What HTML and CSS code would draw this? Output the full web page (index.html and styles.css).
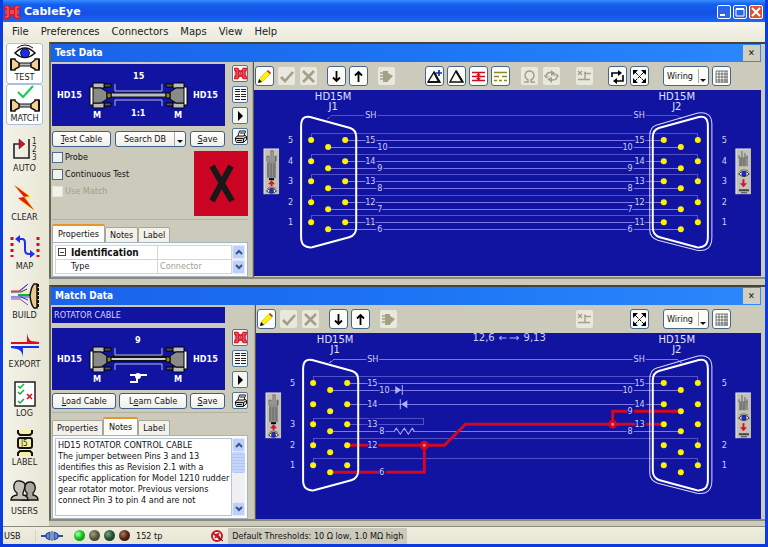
FILE: index.html
```html
<!DOCTYPE html>
<html lang="en">
<head>
    <meta charset="UTF-8">
    <title>CableEye</title>
    <link rel="stylesheet" href="styles.css">
</head>
<body>

<!-- Shared icons -->
<svg class="defs" aria-hidden="true">
    <defs>
        <symbol id="i-logo" viewBox="0 0 16 14">
            <path d="M0 0h5l2 3h2l2-3h5v3l-1 1v6l1 1v3h-5l-2-3H7l-2 3H0v-3l1-1V4L0 3z" fill="#dc1828"/>
            <path d="M4 2v10M12 2v10M7 5v4M9 5v4" stroke="#fff" stroke-opacity=".45" fill="none"/>
            <path d="M1 2h3M12 2h3M1 12h3M12 12h3M2 5v4M14 5v4" stroke="#fff" stroke-opacity=".35" fill="none"/>
        </symbol>
        <symbol id="i-eye" viewBox="0 0 22 15">
            <path d="M1 9Q11-1 21 9Q11 18 1 9z" fill="#fff" stroke="#111" stroke-width="1.6"/>
            <circle cx="11" cy="9" r="4.4" fill="#1a2cf0" stroke="#112" />
            <path d="M3 4Q11-2 19 4" fill="none" stroke="#111"/>
        </symbol>
        <symbol id="i-plugs" viewBox="0 0 30 13">
            <path d="M9 5h12v3H9z" fill="#bbb" stroke="#111"/>
            <path d="M1 1h4v1l4 3v4l-4 2v1H1zM29 1h-4v1l-4 3v4l4 2v1h4z" fill="#f4cf92" stroke="#111" stroke-width="1.4"/>
            <path d="M1 1v11M29 1v11" stroke="#111" stroke-width="2"/>
        </symbol>
        <symbol id="i-list" viewBox="0 0 13 13">
            <path d="M1 1.500h5M7 1.500h5M1 3.500h5M7 3.500h5M1 6.500h5M7 6.500h5M1 8.500h5M7 8.500h5M1 11.500h5M7 11.500h5" stroke="#222"/>
        </symbol>
        <symbol id="i-play" viewBox="0 0 13 13"><path d="M4 2l5 5-5 5z" fill="#000"/></symbol>
        <symbol id="i-print" viewBox="0 0 13 13">
            <path d="M1.500 7.500l3-2h7l1 1v3l-3 3h-7l-1-2z" fill="#d4d2c8" stroke="#111"/>
            <path d="M4 6l1.500-5h6L10 6z" fill="#fff" stroke="#111"/>
            <path d="M1.500 8.500h8l3-2M9.500 9v3M3 10.500h5M6 3h4" stroke="#111" fill="none"/>
        </symbol>
        <symbol id="i-pencil" viewBox="0 0 15 15">
            <path d="M2 13l1-4 7-7 3 3-7 7z" fill="#fff200" stroke="#b9a400" stroke-width=".5"/>
            <path d="M10 2l1-1 3 3-1 1z" fill="#c01818"/><path d="M1 14l1-4 3 3z" fill="#000"/>
        </symbol>
        <symbol id="i-check" viewBox="0 0 15 15"><path d="M2 8l4 4 8-9" fill="none" stroke="#a3a085" stroke-width="2.6"/></symbol>
        <symbol id="i-cross" viewBox="0 0 15 15"><path d="M2 2l11 11M13 2L2 13" stroke="#a3a085" stroke-width="2.6"/></symbol>
        <symbol id="i-down" viewBox="0 0 15 15"><path d="M7.500 2v10M4 8.500l3.500 3.500L11 8.500" fill="none" stroke="#000" stroke-width="1.800"/></symbol>
        <symbol id="i-up" viewBox="0 0 15 15"><path d="M7.500 13V3M4 6.500l3.500-3.500L11 6.500" fill="none" stroke="#000" stroke-width="1.800"/></symbol>
        <symbol id="i-conn" viewBox="0 0 15 15">
            <path d="M4 2h5v2l5 3-5 5v1H4z" fill="#a3a085"/><path d="M1 4h4M1 7h4M1 10h4" stroke="#a3a085" stroke-width="1.500"/>
        </symbol>
        <symbol id="i-tri" viewBox="0 0 15 15"><path d="M7 2L1 13h13z" fill="none" stroke="#111" stroke-width="1.400"/><path d="M7 2l6.500 11" stroke="#111" stroke-width="2"/></symbol>
        <symbol id="i-triplus" viewBox="0 0 15 15">
            <path d="M7 3L1 13h12z" fill="none" stroke="#111" stroke-width="1.400"/><path d="M7 3l5 10H1" fill="none" stroke="#111" stroke-width="2"/>
            <path d="M12 1v6M9 4h6" stroke="#1424d0" stroke-width="1.700"/>
        </symbol>
        <symbol id="i-short" viewBox="0 0 15 15">
            <path d="M1 3.500h13M1 7.500h13M1 11.500h13M7.500 3v9" fill="none" stroke="#d00c20" stroke-width="1.500"/>
            <path d="M5 6.500L7.500 4 10 6.500zM5 9l2.500 2.500L10 9z" fill="#d00c20"/>
        </symbol>
        <symbol id="i-open" viewBox="0 0 15 15"><path d="M1 3.500h13M1 7.500h5M9 7.500h5M1 11.500h3M6 11.500h3M11 11.500h3" stroke="#8c8a28" stroke-width="1.600"/></symbol>
        <symbol id="i-ohm" viewBox="0 0 15 15"><path d="M2 13h4v-2C1 8 3 2 7.500 2S14 8 9 11v2h4" fill="none" stroke="#a3a085" stroke-width="1.500"/></symbol>
        <symbol id="i-sync" viewBox="0 0 15 15">
            <path d="M2 8c0-4 4-6 8-4M13 6c1 5-4 6-8 4" fill="none" stroke="#a3a085" stroke-width="1.500"/>
            <path d="M7 7V1l5 4zM8 8v6l-5-4z" fill="#a3a085"/><path d="M0 6l2 3 3-2M15 8l-2-3-3 2" fill="none" stroke="#a3a085"/>
        </symbol>
        <symbol id="i-xf" viewBox="0 0 15 15"><path d="M1 2l4 4M5 2L1 6M1 10.500h7M8 10.500V4.500h6M8 10.500h5M7 3.500h2" fill="none" stroke="#a3a085" stroke-width="1.400"/></symbol>
        <symbol id="i-rotate" viewBox="0 0 15 15">
            <path d="M2 8V4h7M13 6v6H6" fill="none" stroke="#000" stroke-width="1.600"/><path d="M8 1l4 3-4 3zM7 9l-4 3 4 3z"/>
        </symbol>
        <symbol id="i-expand" viewBox="0 0 15 15">
            <path d="M3 3l9 9M12 3l-9 9" stroke="#000" stroke-dasharray="4 1"/><path d="M1 1h5L1 6zM14 1H9l5 5zM1 14h5L1 9zM14 14H9l5-5z"/>
        </symbol>
        <symbol id="i-grid" viewBox="0 0 15 15"><path d="M2 2v12M5 2v12M8 2v12M11 2v12M13 2v12M2 2h12M2 5h12M2 8h12M2 11h12M2 13h12" stroke="#444" stroke-width=".7"/></symbol>

        <!-- Cable end with hood and thumb screws -->
        <g id="cable-end">
            <path d="M38 23h4v18h-4z" fill="#fff" stroke="#000"/>
            <path d="M52 20h7v3h-7zM52 39h7v3h-7z" fill="#555" stroke="#000"/>
            <path d="M41 19h11v5H41zM41 39h11v5H41z" fill="#bbb" stroke="#000"/>
            <path d="M41 24h8l6 4v7l-6 4h-8z" fill="#8a8a8a" stroke="#000"/>
            <path d="M55 29h4v5h-4z" fill="#8a8420" stroke="#000"/>
        </g>
        <!-- Shell outline of an HD15 connector and its pins -->
        <path id="shell" d="M47 36Q47 25 56 27L96 38Q102 40 102 47V137Q102 145 95 147L58 157Q47 158 47 147z"/>
        <path id="shell-outer" d="M43 34Q43 21 57 23L98 35Q105 37 105 46V140Q105 147 97 150L58 160Q43 162 43 147z"/>
        <g id="pins">
            <circle cx="57" cy="50" r="3"/><circle cx="57" cy="71" r="3"/><circle cx="57" cy="91" r="3"/><circle cx="57" cy="112" r="3"/><circle cx="57" cy="132" r="3"/>
            <circle cx="91" cy="50" r="3"/><circle cx="91" cy="71" r="3"/><circle cx="91" cy="91" r="3"/><circle cx="91" cy="112" r="3"/><circle cx="91" cy="132" r="3"/>
            <circle cx="74" cy="57" r="3"/><circle cx="74" cy="78" r="3"/><circle cx="74" cy="98" r="3"/><circle cx="74" cy="119" r="3"/><circle cx="74" cy="139" r="3"/>
        </g>
        <g id="probe-left">
            <path d="M0 0h15v45H0z" fill="#c4c2b6"/><path d="M0 45V0h15" fill="none" stroke="#eee"/>
            <path d="M3 12h9v17H3z" fill="#8c8c8c"/><path d="M3 12V7h2v5M7 12V2h2v10M11 12V7h1v5M4 14v14M7 14v14M10 14v14" fill="none" stroke="#666"/>
            <path d="M5 29h5v2H5z"/><path d="M7.500 37v-4" stroke="#d8102a" stroke-width="2"/><path d="M4 35l3.500-4 3.500 4z" fill="#d8102a"/>
            <use href="#i-eye" x="2" y="37" width="11" height="8"/>
        </g>
        <g id="probe-right">
            <path d="M0 0h15v45H0z" fill="#c4c2b6"/><path d="M0 45V0h15" fill="none" stroke="#eee"/>
            <path d="M3 8h9v9H3z" fill="#8c8c8c"/><path d="M3 9V6M6 9V2M9 9V4M11 9V6M5 9v8M8 9v8" fill="none" stroke="#666"/>
            <use href="#i-eye" x="2" y="20" width="12" height="8"/>
            <path d="M7.500 30v5" stroke="#d8102a" stroke-width="2"/><path d="M4 34l3.500 4 3.500-4z" fill="#d8102a"/>
            <path d="M3 40h10v2H3zM5 43h6v1H5z" fill="#444"/>
        </g>
    </defs>
</svg>

<div class="app">
    <header class="titlebar">
        <svg class="logo" width="16" height="14"><use href="#i-logo"/></svg>
        <h1>CableEye</h1>
        <div class="window-buttons">
            <button type="button" aria-label="Minimize"><svg width="12" height="12"><path d="M2 8h5v2H2z" fill="#fff"/></svg></button>
            <button type="button" aria-label="Maximize"><svg width="12" height="12"><path d="M2 3h8v7H2z" fill="none" stroke="#fff"/><path d="M2 2h8v2H2z" fill="#fff"/></svg></button>
            <button type="button" class="close" aria-label="Close"><svg width="12" height="12"><path d="M2 2l8 8M10 2l-8 8" stroke="#fff" stroke-width="2"/></svg></button>
        </div>
    </header>

    <nav class="menubar">
        <a href="#">File</a>
        <a href="#">Preferences</a>
        <a href="#">Connectors</a>
        <a href="#">Maps</a>
        <a href="#">View</a>
        <a href="#">Help</a>
    </nav>

    <div class="workspace">
        <aside class="sidebar">
            <button type="button" class="tool boxed">
                <svg width="30" height="28"><use href="#i-eye" x="4" y="0" width="22" height="15"/><use href="#i-plugs" x="0" y="14" width="30" height="13"/></svg>
                <span>TEST</span>
            </button>
            <button type="button" class="tool boxed">
                <svg width="30" height="28"><path d="M8 7l5 5L23 1" fill="none" stroke="#10d050" stroke-width="2"/><use href="#i-plugs" x="0" y="14" width="30" height="13"/></svg>
                <span>MATCH</span>
            </button>
            <button type="button" class="tool">
                <svg width="30" height="26">
                    <path d="M12 8H4v14h15V3" fill="none" stroke="#222" stroke-width="1.600"/><path d="M9 3l6 5-6 5z" fill="#d8101c" stroke="#222" stroke-width=".5"/>
                    <text x="22" y="8" class="tiny">1</text><text x="22" y="16" class="tiny">2</text><text x="22" y="24" class="tiny">3</text>
                </svg>
                <span>AUTO</span>
            </button>
            <button type="button" class="tool">
                <svg width="30" height="26"><path d="M6 0l15 12-5 1 9 13L9 15l6-1z" fill="#ffe600"/><path d="M4 0l15 11-5 1 10 13L8 13l6-1z" fill="#e01c20"/></svg>
                <span>CLEAR</span>
            </button>
            <button type="button" class="tool">
                <svg width="30" height="26">
                    <path d="M2 3v20M28 3v20" stroke="#d80c18" stroke-width="3" stroke-dasharray="3 3"/>
                    <path d="M8 5h4q3 0 3 4v7q0 4 4 4h3" fill="none" stroke="#1a30f0" stroke-width="2"/><path d="M5 5l5-4v8zM25 20l-5-4v8z" fill="#1a30f0"/>
                </svg>
                <span>MAP</span>
            </button>
            <button type="button" class="tool">
                <svg width="30" height="26">
                    <path d="M1 8h8l8-6" fill="none" stroke="#e0203c"/><path d="M1 9h10l6-3" fill="none" stroke="#334"/><path d="M8 12h12" stroke="#18b028" stroke-width="2"/>
                    <path d="M1 14h10l7 3" fill="none" stroke="#1a30f0"/><path d="M1 16h9l8 6" fill="none" stroke="#9040c0"/><path d="M10 8l8-7M10 14h9" stroke="#2040e0"/>
                    <path d="M27 1h-3q-3 3-4 12 1 9 4 12h3z" fill="#ecc88c" stroke="#111" stroke-width="1.500"/><path d="M28 1v24" stroke="#111" stroke-width="2" stroke-dasharray="3 1"/>
                </svg>
                <span>BUILD</span>
            </button>
            <button type="button" class="tool">
                <svg width="30" height="26"><path d="M1 12h28v-2l-8-1q-3-2-4-8v9H1z" fill="#d8101c"/><path d="M29 14H1v2l6 1q5 1 6 8v-9h16z" fill="#1a30f0"/></svg>
                <span>EXPORT</span>
            </button>
            <button type="button" class="tool">
                <svg width="30" height="26">
                    <path d="M5 1h20v24H5z" fill="#fff" stroke="#222" stroke-width="1.500"/>
                    <path d="M8 5l2 2 4-4M8 11l2 2 4-4M8 20l2 2 4-4" fill="none" stroke="#10b040" stroke-width="1.500"/>
                    <path d="M17 13l5 5M22 13l-5 5" stroke="#d81020" stroke-width="1.600"/>
                </svg>
                <span>LOG</span>
            </button>
            <button type="button" class="tool">
                <svg width="30" height="26">
                    <path d="M8 0v3l2 2h10l2-2V0zM8 26v-3l2-2h10l2 2v3z" fill="#f6efa0"/>
                    <path d="M8 0v3l2 2h10l2-2V0M8 26v-3l2-2h10l2 2v3" fill="none" stroke="#111" stroke-width="2"/>
                    <rect x="8" y="8" width="14" height="10" rx="2" fill="#f6efa0" stroke="#111" stroke-width="2"/><text x="11" y="16" class="tiny">J5</text>
                </svg>
                <span>LABEL</span>
            </button>
            <button type="button" class="tool">
                <svg width="30" height="26">
                    <path d="M12 21q0-4 5-5V14q-3-3-2-7t5-4 5 4-2 7v2q5 1 5 5z" fill="#a8a69a" stroke="#111" stroke-width="1.300"/>
                    <path d="M1 21q0-4 6-5V14q-4-3-3-8t6-4 5 4-2 8v2q5 1 5 5z" fill="#c4c2b6" stroke="#111" stroke-width="1.300"/>
                </svg>
                <span>USERS</span>
            </button>
        </aside>

        <main class="panes">
            <section class="pane">
                <header class="pane-title">
                    <h2>Test Data</h2>
                    <button type="button" aria-label="Close Test Data">✕</button>
                </header>
                <div class="pane-body">
                    <div class="info">
                        <div class="info-top">
                            <div class="info-main">
                                <svg class="cable" viewBox="0 0 173 62">
                                    <path d="M63 20v7h47v-7M63 42v-6h47v6" class="bracket"/>
                                    <path d="M59 29h55v4H59z" fill="#bbb" stroke="#111"/>
                                    <use href="#cable-end"/><use href="#cable-end" transform="translate(173 0) scale(-1 1)"/>
                                    <text x="5" y="34">HD15</text><text x="141" y="34">HD15</text>
                                    <text x="81" y="15">15</text><text x="79" y="52">1:1</text>
                                    <text x="41" y="54">M</text><text x="122" y="54">M</text>
                                </svg>
                                <div class="actions">
                                    <button type="button" class="btn"><u>T</u>est Cable</button>
                                    <span class="split">
                                        <button type="button">Search DB</button>
                                        <button type="button" class="arrow" aria-label="Search options"></button>
                                    </span>
                                    <button type="button" class="btn save"><u>S</u>ave</button>
                                </div>
                            </div>
                            <div class="side-tools">
                                <button type="button" aria-label="Cable"><svg width="13" height="13"><use href="#i-logo"/></svg></button>
                                <button type="button" aria-label="List"><svg width="13" height="13"><use href="#i-list"/></svg></button>
                                <button type="button" aria-label="Run"><svg width="13" height="13"><use href="#i-play"/></svg></button>
                                <button type="button" aria-label="Print"><svg width="13" height="13"><use href="#i-print"/></svg></button>
                            </div>
                        </div>
                        <div class="result">
                            <div class="checks">
                                <label><input type="checkbox"> Probe</label>
                                <label><input type="checkbox"> Continuous Test</label>
                                <label class="off"><input type="checkbox" disabled> Use Match</label>
                            </div>
                            <svg class="verdict" width="54" height="65" role="img" aria-label="Fail">
                                <path d="M18 15l20 35M37 15L18 50" stroke="#181818" stroke-width="6"/>
                            </svg>
                        </div>
                        <hr>
                        <div class="tabs">
                            <button type="button" class="active">Properties</button>
                            <button type="button">Notes</button>
                            <button type="button">Label</button>
                        </div>
                        <div class="tab-panel">
                            <table class="props">
                                <tr><th><span class="minus"></span>Identification</th><td></td></tr>
                                <tr><td>Type</td><td class="off">Connector</td></tr>
                            </table>
                            <div class="scroll">
                                <button type="button" aria-label="Scroll up"><svg width="8" height="6"><path d="M1 5l3-3 3 3" class="chev"/></svg></button>
                                <button type="button" aria-label="Scroll down"><svg width="8" height="6"><path d="M1 1l3 3 3-3" class="chev"/></svg></button>
                            </div>
                        </div>
                    </div>
                    <div class="view">
                        <div class="toolbar">
                            <div class="group">
                                <button type="button" aria-label="Edit"><svg width="15" height="15"><use href="#i-pencil"/></svg></button>
                                <button type="button" disabled aria-label="Accept"><svg width="15" height="15"><use href="#i-check"/></svg></button>
                                <button type="button" disabled aria-label="Cancel"><svg width="15" height="15"><use href="#i-cross"/></svg></button>
                            </div>
                            <div class="group">
                                <button type="button" aria-label="Down"><svg width="15" height="15"><use href="#i-down"/></svg></button>
                                <button type="button" aria-label="Up"><svg width="15" height="15"><use href="#i-up"/></svg></button>
                            </div>
                            <div class="group">
                                <button type="button" disabled aria-label="Connector"><svg width="15" height="15"><use href="#i-conn"/></svg></button>
                            </div>
                            <div class="group apart">
                                <button type="button" aria-label="Add difference"><svg width="15" height="15"><use href="#i-triplus"/></svg></button>
                                <button type="button" aria-label="Difference"><svg width="15" height="15"><use href="#i-tri"/></svg></button>
                                <button type="button" aria-label="Shorts"><svg width="15" height="15"><use href="#i-short"/></svg></button>
                                <button type="button" aria-label="Opens"><svg width="15" height="15"><use href="#i-open"/></svg></button>
                            </div>
                            <div class="right">
                                <div class="group">
                                    <button type="button" disabled aria-label="Resistance"><svg width="15" height="15"><use href="#i-ohm"/></svg></button>
                                    <button type="button" disabled aria-label="Refresh"><svg width="15" height="15"><use href="#i-sync"/></svg></button>
                                </div>
                                <div class="group">
                                    <button type="button" disabled aria-label="Crossing"><svg width="15" height="15"><use href="#i-xf"/></svg></button>
                                </div>
                                <div class="group">
                                    <button type="button" aria-label="Swap sides"><svg width="15" height="15"><use href="#i-rotate"/></svg></button>
                                    <button type="button" aria-label="Fit"><svg width="15" height="15"><use href="#i-expand"/></svg></button>
                                </div>
                                <div class="group">
                                    <span class="picker"><select aria-label="View"><option>Wiring</option></select></span>
                                    <button type="button" aria-label="Grid"><svg width="15" height="15"><use href="#i-grid"/></svg></button>
                                </div>
                            </div>
                        </div>
                        <svg class="canvas" viewBox="0 0 506 186">
                            <g class="wire">
                                <path d="M73 29l5-4h344l5 4"/>
                                <path d="M57 50v-7h386v7M57 71v-7h386v7M57 91v-7h386v7M57 112v-7h386v7M57 132v-7h386v7"/>
                                <path class="lit" d="M91 50h318M74 57h352M91 71h318M74 78h352M91 91h318M74 98h352M91 112h318M74 119h352M91 132h318M74 139h352"/>
                            </g>
                            <use href="#shell" class="shell"/>
                            <g transform="translate(500 0) scale(-1 1)">
                                <use href="#shell" class="shell"/><use href="#shell-outer" class="shell-outer"/>
                                <use href="#pins" class="pins"/>
                            </g>
                            <use href="#pins" class="pins"/>
                            <g class="name"><text x="79" y="10">HD15M</text><text x="79" y="20">J1</text><text x="422" y="10">HD15M</text><text x="422" y="20">J2</text></g>
                            <g class="num">
                                <text x="111" y="28">SH</text><text x="111" y="53">15</text><text x="123" y="60">10</text><text x="111" y="74">14</text><text x="123" y="81">9</text>
                                <text x="111" y="94">13</text><text x="123" y="101">8</text><text x="111" y="115">12</text><text x="123" y="122">7</text><text x="111" y="135">11</text><text x="123" y="142">6</text>
                                <text x="34" y="53">5</text><text x="34" y="74">4</text><text x="34" y="94">3</text><text x="34" y="115">2</text><text x="34" y="135">1</text>
                            </g>
                            <g class="num end">
                                <text x="390" y="28">SH</text><text x="390" y="53">15</text><text x="378" y="60">10</text><text x="390" y="74">14</text><text x="378" y="81">9</text>
                                <text x="390" y="94">13</text><text x="378" y="101">8</text><text x="390" y="115">12</text><text x="378" y="122">7</text><text x="390" y="135">11</text><text x="378" y="142">6</text>
                                <text x="472" y="53">5</text><text x="472" y="74">4</text><text x="472" y="94">3</text><text x="472" y="115">2</text><text x="472" y="135">1</text>
                            </g>
                            <use href="#probe-left" x="10" y="59"/><use href="#probe-right" x="481" y="59"/>
                        </svg>
                    </div>
                </div>
            </section>

            <section class="pane">
                <header class="pane-title">
                    <h2>Match Data</h2>
                    <button type="button" aria-label="Close Match Data">✕</button>
                </header>
                <div class="pane-body">
                    <div class="info wide">
                        <div class="cable-name">ROTATOR CABLE</div>
                        <div class="info-top">
                            <div class="info-main">
                                <svg class="cable" viewBox="0 0 173 62">
                                    <path d="M63 20v7h47v-7M63 42v-6h47v6" class="bracket"/>
                                    <path d="M59 28h55v6H59z" fill="#111"/><path d="M59 31h55" stroke="#ccc" stroke-width="2"/>
                                    <use href="#cable-end"/><use href="#cable-end" transform="translate(173 0) scale(-1 1)"/>
                                    <text x="5" y="34">HD15</text><text x="141" y="34">HD15</text>
                                    <text x="83" y="15">9</text>
                                    <path d="M78 54h7v-7M78 47h17" fill="none" stroke="#fff" stroke-width="2"/><circle cx="86" cy="48" r="3" fill="#fff"/>
                                    <text x="41" y="54">M</text><text x="122" y="54">M</text>
                                </svg>
                                <div class="actions tight">
                                    <button type="button" class="btn"><u>L</u>oad Cable</button>
                                    <button type="button" class="btn">L<u>e</u>arn Cable</button>
                                    <button type="button" class="btn save"><u>S</u>ave</button>
                                </div>
                            </div>
                            <div class="side-tools">
                                <button type="button" aria-label="Cable"><svg width="13" height="13"><use href="#i-logo"/></svg></button>
                                <button type="button" aria-label="List"><svg width="13" height="13"><use href="#i-list"/></svg></button>
                                <button type="button" aria-label="Run"><svg width="13" height="13"><use href="#i-play"/></svg></button>
                                <button type="button" aria-label="Print"><svg width="13" height="13"><use href="#i-print"/></svg></button>
                            </div>
                        </div>
                        <hr>
                        <div class="tabs">
                            <button type="button">Properties</button>
                            <button type="button" class="active">Notes</button>
                            <button type="button">Label</button>
                        </div>
                        <div class="tab-panel">
                            <textarea class="notes" aria-label="Notes" rows="6" wrap="off">HD15 ROTATOR CONTROL CABLE
The jumper between Pins 3 and 13
identifies this as Revision 2.1 with a
specific application for Model 1210 rudder
gear rotator motor. Previous versions
connect Pin 3 to pin 4 and are not</textarea>
                            <div class="scroll">
                                <button type="button" aria-label="Scroll up"><svg width="8" height="6"><path d="M1 5l3-3 3 3" class="chev"/></svg></button>
                                <span class="thumb"></span>
                                <button type="button" aria-label="Scroll down"><svg width="8" height="6"><path d="M1 1l3 3 3-3" class="chev"/></svg></button>
                            </div>
                        </div>
                    </div>
                    <div class="view">
                        <div class="toolbar">
                            <div class="group">
                                <button type="button" aria-label="Edit"><svg width="15" height="15"><use href="#i-pencil"/></svg></button>
                                <button type="button" disabled aria-label="Accept"><svg width="15" height="15"><use href="#i-check"/></svg></button>
                                <button type="button" disabled aria-label="Cancel"><svg width="15" height="15"><use href="#i-cross"/></svg></button>
                            </div>
                            <div class="group">
                                <button type="button" aria-label="Down"><svg width="15" height="15"><use href="#i-down"/></svg></button>
                                <button type="button" aria-label="Up"><svg width="15" height="15"><use href="#i-up"/></svg></button>
                            </div>
                            <div class="group">
                                <button type="button" disabled aria-label="Connector"><svg width="15" height="15"><use href="#i-conn"/></svg></button>
                            </div>
                            <div class="right">
                                <div class="group before-gap">
                                    <button type="button" disabled aria-label="Crossing"><svg width="15" height="15"><use href="#i-xf"/></svg></button>
                                </div>
                                <div class="group">
                                    <button type="button" aria-label="Fit"><svg width="15" height="15"><use href="#i-expand"/></svg></button>
                                </div>
                                <div class="group">
                                    <span class="picker"><select aria-label="View"><option>Wiring</option></select></span>
                                    <button type="button" aria-label="Grid"><svg width="15" height="15"><use href="#i-grid"/></svg></button>
                                </div>
                            </div>
                        </div>
                        <svg class="canvas" viewBox="0 0 504 186">
                            <g class="wire">
                                <path d="M73 30l5-4h342l5 4" class="lit"/>
                                <path d="M57 50v-7h384v7M57 91v-6h110v6H91M57 112v-7h384v7M57 132v-7h384v7"/>
                                <path class="lit" d="M91 50h316M74 57h350M91 71h316M74 98h65M157 98h267"/>
                            </g>
                            <path d="M138 98l2-3 4 6 4-6 4 6 4-6 2 3" class="part"/>
                            <path d="M139 53l6 4-6 4zM151 67l-6 4 6 4z" fill="#b4b0ff"/>
                            <path d="M146 52v10M144 66v10" class="part"/>
                            <path class="fault" d="M91 112h97l21-21h198M74 139h94v-27M356 91V78h68"/>
                            <circle cx="168" cy="112" r="3" class="joint"/><circle cx="356" cy="91" r="3" class="joint"/>
                            <use href="#shell" class="shell"/>
                            <g transform="translate(498 0) scale(-1 1)">
                                <use href="#shell" class="shell"/><use href="#shell-outer" class="shell-outer"/>
                                <use href="#pins" class="pins"/>
                            </g>
                            <use href="#pins" class="pins"/>
                            <g class="name"><text x="79" y="10">HD15M</text><text x="79" y="20">J1</text><text x="420" y="10">HD15M</text><text x="420" y="20">J2</text></g>
                            <text x="216" y="8" class="route">12,6</text><text x="267" y="8" class="route">9,13</text>
                            <path d="M243 5h7M253 5h9M245 3l-2 2 2 2M260 3l2 2-2 2" class="part"/>
                            <g class="num">
                                <text x="111" y="29">SH</text><text x="111" y="53">15</text><text x="123" y="60">10</text><text x="111" y="74">14</text>
                                <text x="111" y="94">13</text><text x="123" y="101">8</text>
                                <text x="34" y="53">5</text><text x="34" y="94">3</text><text x="34" y="115">2</text><text x="34" y="135">1</text>
                                <text x="111" y="115">12</text><text x="123" y="142">6</text>
                            </g>
                            <g class="num end">
                                <text x="388" y="29">SH</text><text x="388" y="53">15</text><text x="376" y="60">10</text><text x="388" y="74">14</text>
                                <text x="376" y="81">9</text><text x="388" y="94">13</text><text x="376" y="101">8</text>
                                <text x="470" y="53">5</text><text x="470" y="115">2</text><text x="470" y="135">1</text>
                            </g>
                            <use href="#probe-left" x="10" y="60"/><use href="#probe-right" x="479" y="60"/>
                        </svg>
                    </div>
                </div>
            </section>
        </main>
    </div>

    <footer class="statusbar">
        <span class="port">USB</span>
        <svg class="link" width="24" height="12"><path d="M1 6h6M17 6h6" stroke="#2a50a8" stroke-width="2"/><path d="M6 4l4-2v8l-4-2zM18 4l-4-2v8l4-2z" fill="#5c86e0" stroke="#1c3c98"/><path d="M12 1v10" stroke="#1c3c98"/></svg>
        <span class="leds"><i class="led green"></i><i class="led olive"></i><i class="led teal"></i><i class="led brown"></i></span>
        <span>152 tp</span>
        <svg class="alarm" width="13" height="12"><circle cx="6" cy="6" r="5" fill="#fff" stroke="#d01420" stroke-width="2"/><path d="M2 3l8 7M4 8l4-5M5 4l4 4" stroke="#d01420" stroke-width="2"/><path d="M8 8l4 3" stroke="#111"/></svg>
        <span class="thresholds">Default Thresholds: 10 Ω low, 1.0 MΩ high</span>
    </footer>
</div>

</body>
</html>
```
FILE: styles.css
```css
* {
    box-sizing: border-box;
}

body {
    margin: 0;
    font: 9px/12px "DejaVu Sans Condensed", "DejaVu Sans", sans-serif;
    color: #111;
    background: #0a3cd2;
}

button, input, select, textarea {
    font: inherit;
    color: inherit;
    margin: 0;
    padding: 0;
}

svg {
    display: block;
    flex: none;
}

.defs {
    position: absolute;
    width: 0;
    height: 0;
}

.app {
    display: flex;
    flex-direction: column;
    min-height: 100vh;
    border: solid #0a3ce0;
    border-width: 0 3px 4px;
    background: #cccaba;
}

/* Window title and menu */
.titlebar {
    display: flex;
    align-items: center;
    height: 22px;
    padding: 2px 2px 0 1px;
    gap: 4px;
    background: linear-gradient(#3a8cff, #1560ee 20%, #1450e4 60%, #1c68f8);
}

.titlebar h1 {
    flex: 1;
    margin: 0;
    font: bold 11px/14px "DejaVu Sans", sans-serif;
    color: #fff;
}

.window-buttons {
    display: flex;
    gap: 2px;
}

.window-buttons button {
    width: 14px;
    height: 14px;
    border: 1px solid #fff;
    border-radius: 2px;
    background: #2a64e8;
}

.window-buttons .close {
    background: #e0502c;
}

.menubar {
    display: flex;
    align-items: center;
    gap: 12px;
    height: 20px;
    padding: 0 9px;
    background: linear-gradient(#f6f5ee, #ebe9d8);
}

.menubar a {
    font: 10px/14px "DejaVu Sans", sans-serif;
    color: #222;
    text-decoration: none;
}

.workspace {
    display: flex;
    flex: 1;
}

/* Left tool strip */
.sidebar {
    flex: none;
    display: flex;
    flex-direction: column;
    width: 46px;
    padding: 1px 6px 0 3px;
    background: linear-gradient(90deg, #f4f3ea, #e8e6d4);
}

.tool {
    display: flex;
    flex-direction: column;
    align-items: center;
    justify-content: flex-end;
    height: 49px;
    border: 0;
    background: none;
    color: #222;
}

.tool.boxed {
    height: 41px;
    border: 1px solid #a9bfdc;
    border-radius: 3px;
    background: #fff;
}

.tool.boxed span {
    line-height: 11px;
}

.tiny {
    font-size: 8px;
    fill: #222;
}

/* Panes */
.panes {
    flex: 1;
    display: flex;
    flex-direction: column;
    gap: 6px;
    min-width: 0;
    padding-bottom: 5px;
}

.pane {
    border-top: 2px solid #44443c;
    border-left: 2px solid #66655a;
    border-bottom: 2px solid #8c8a7a;
    padding-right: 4px;
}

.pane-title {
    display: flex;
    align-items: center;
    justify-content: space-between;
    height: 18px;
    padding: 0 1px 0 4px;
    background: linear-gradient(90deg, #1a62ea, #1c74f4 50%, #2c88fc);
    color: #fff;
}

.pane-title h2 {
    margin: 0;
    font-size: 10px;
    line-height: 14px;
}

.pane-title button {
    width: 17px;
    height: 16px;
    border: 0;
    background: #d0cebe;
    color: #111;
    font-weight: bold;
}

.pane-body {
    display: flex;
}

.info {
    flex: none;
    display: flex;
    flex-direction: column;
    width: 203px;
    padding: 2px 4px 0 1px;
    border-right: 2px ridge #b0ae9e;
}

.info.wide {
    width: 205px;
    padding-right: 6px;
}

.info-top {
    display: flex;
    gap: 7px;
}

.info-main {
    flex: 1;
}

.cable-name {
    width: 173px;
    margin-bottom: 5px;
    padding: 2px;
    line-height: 12px;
    background: #1014a0;
    color: #d4d4ff;
}

.cable {
    width: 100%;
    background: #1014a0;
}

.cable text {
    font-weight: bold;
    fill: #fff;
}

.bracket {
    fill: none;
    stroke: #b8b8d8;
}

.side-tools {
    display: flex;
    flex-direction: column;
    gap: 4px;
    padding-top: 1px;
}

.side-tools button {
    display: flex;
    align-items: center;
    justify-content: center;
    width: 16px;
    height: 17px;
    border: 1px solid #53749c;
    border-radius: 2px;
    background: #f6f6f2;
}

.actions {
    display: flex;
    gap: 4px;
    margin-top: 5px;
}

.actions.tight {
    margin-top: 3px;
    gap: 3px;
}

.btn, .split {
    flex: auto;
    height: 16px;
    border: 1px solid #3c5f8c;
    border-radius: 3px;
    background: linear-gradient(#fff, #efeee6);
}

.save {
    flex: none;
    width: 35px;
}

.split {
    display: flex;
}

.split button {
    flex: 1;
    border: 0;
    background: none;
}

.split .arrow {
    flex: none;
    width: 11px;
    border-left: 1px solid #aaa;
}

.split .arrow::before {
    content: "";
    display: block;
    margin: 5px auto 0;
    width: 0;
    border: solid transparent;
    border-width: 3px 3px 0;
    border-top-color: #111;
}

.result {
    display: flex;
    justify-content: space-between;
    margin-top: 4px;
}

.checks {
    display: flex;
    flex-direction: column;
    gap: 5px;
}

.checks label {
    display: flex;
    align-items: center;
    gap: 2px;
}

.checks input {
    appearance: none;
    width: 11px;
    height: 11px;
    border: 1px solid #4c6c94;
    background: #f2f2ec;
}

.checks input:disabled {
    border-color: #e4e2d6;
}

.off {
    color: #a09e90;
}

.verdict {
    background: #cc0424;
}

.info hr {
    width: 100%;
    margin: 3px 0 4px;
    border: 0;
    border-top: 1px solid #b2b0a2;
}

/* Tabs */
.tabs {
    display: flex;
    align-items: flex-end;
}

.tabs button {
    height: 15px;
    padding: 0 4px;
    border: 1px solid #a8a698;
    border-bottom: 0;
    border-radius: 2px 2px 0 0;
    background: #f2f1ea;
}

.tabs .active {
    height: 18px;
    padding: 0 5px;
    border-top: 2px solid #e8962c;
    background: #fbfbf8;
}

.tab-panel {
    display: flex;
    padding: 2px;
    border: 1px solid #a4b4c4;
    background: #fbfbf8;
}

.props {
    flex: 1;
    table-layout: fixed;
    border-collapse: collapse;
    border: 1px solid #9cb0c8;
    background: #fff;
}

.props th, .props td {
    padding: 0 2px;
    border: 1px solid #d8d6c8;
    text-align: left;
    line-height: 13px;
}

.props tr td:first-child {
    padding-left: 15px;
}

.props th {
    width: 58%;
    font-size: 10px;
    white-space: nowrap;
}

.minus {
    display: inline-block;
    width: 8px;
    height: 8px;
    margin-right: 5px;
    border: 1px solid #444;
    background: linear-gradient(#444, #444) center / 4px 1px no-repeat;
}

.scroll {
    display: flex;
    flex-direction: column;
    justify-content: space-between;
    width: 13px;
    background: #f0f0f4;
}

.scroll button {
    display: flex;
    align-items: center;
    justify-content: center;
    height: 14px;
    border: 1px solid #e0e8fc;
    border-radius: 2px;
    background: #bfd0f8;
}

.thumb {
    height: 21px;
    margin-bottom: auto;
    border-radius: 2px;
    background: repeating-linear-gradient(#c4d4fa 0 2px, #b4c6f4 2px 3px);
}

.chev {
    fill: none;
    stroke: #33558c;
    stroke-width: 2;
}

.notes {
    flex: 1;
    min-width: 0;
    height: 78px;
    padding: 1px 0 0 2px;
    border: 1px solid #b8c4d4;
    background: #fff;
    line-height: 11px;
    resize: none;
    overflow: hidden;
}

/* Wiring view */
.view {
    flex: 1;
    min-width: 0;
}

.toolbar {
    display: flex;
    gap: 9px;
    height: 28px;
    padding: 4px 30px 4px 1px;
}

.group {
    display: flex;
    gap: 3px;
}

.apart {
    margin-left: 20px;
}

.right {
    display: flex;
    gap: 14px;
    margin-left: auto;
}

.before-gap {
    margin-right: 22px;
}

.group button {
    display: flex;
    align-items: center;
    justify-content: center;
    width: 19px;
    height: 20px;
    border: 1px solid #44668f;
    border-radius: 3px;
    background: #fcfcf8;
}

.group button:disabled {
    border-color: transparent;
    background: #e9e8de;
    background-clip: padding-box;
}

.picker {
    position: relative;
}

.picker select {
    appearance: none;
    width: 46px;
    height: 20px;
    padding-left: 3px;
    border: 1px solid #44668f;
    border-radius: 3px;
    background: linear-gradient(#aaa, #aaa) 34px 2px / 1px 14px no-repeat #fcfcf8;
}

.picker::after {
    content: "";
    position: absolute;
    right: 3px;
    bottom: 4px;
    border: solid transparent;
    border-width: 3px 3px 0;
    border-top-color: #111;
    pointer-events: none;
}

.canvas {
    width: 100%;
    background: #1014a0;
}

.wire {
    fill: none;
    stroke: #5450cc;
    shape-rendering: crispEdges;
}

.wire .lit {
    stroke: #7c78ec;
}

.part {
    fill: none;
    stroke: #b4b0ff;
}

.shell {
    fill: none;
    stroke: #fff;
    stroke-width: 2;
}

.shell-outer {
    fill: none;
    stroke: #d8d8ff;
}

.pins {
    fill: #fff200;
}

.name {
    font: 10px "DejaVu Sans", sans-serif;
    fill: #e0e0ff;
    text-anchor: middle;
}

.num {
    fill: #d0d0f8;
    stroke: #1014a0;
    stroke-width: 3;
    paint-order: stroke;
}

.end {
    text-anchor: end;
}

.route {
    font: 10px "DejaVu Sans", sans-serif;
    fill: #d0d0f8;
}

.fault {
    fill: none;
    stroke: #d40820;
    stroke-width: 3;
}

.joint {
    fill: #f08080;
    stroke: #d40820;
    stroke-width: 3;
}

/* Status bar */
.statusbar {
    display: flex;
    align-items: center;
    height: 18px;
    border-top: 1px solid #8c8a7a;
    background: linear-gradient(#f0eee0, #e6e4d2);
}

.port {
    width: 33px;
    padding-left: 1px;
    border-right: 1px solid #d4d2c2;
}

.link {
    margin: 0 10px 0 4px;
}

.leds {
    display: flex;
    gap: 4px;
    margin-right: 6px;
}

.led {
    width: 11px;
    height: 11px;
    border-radius: 50%;
}

.green {
    background: radial-gradient(circle at 4px 4px, #b0ffb0, #10b818 50%, #088010);
}

.olive {
    background: radial-gradient(circle at 4px 4px, #a0a088, #54543c 50%, #3c3c28);
}

.teal {
    background: radial-gradient(circle at 4px 4px, #80a088, #205030 50%, #183c20);
}

.brown {
    background: radial-gradient(circle at 4px 4px, #a08070, #54200c 50%, #381008);
}

.alarm {
    margin: 0 4px 0 49px;
}

.thresholds {
    padding: 2px 4px;
    background: #cccaba;
}
```
